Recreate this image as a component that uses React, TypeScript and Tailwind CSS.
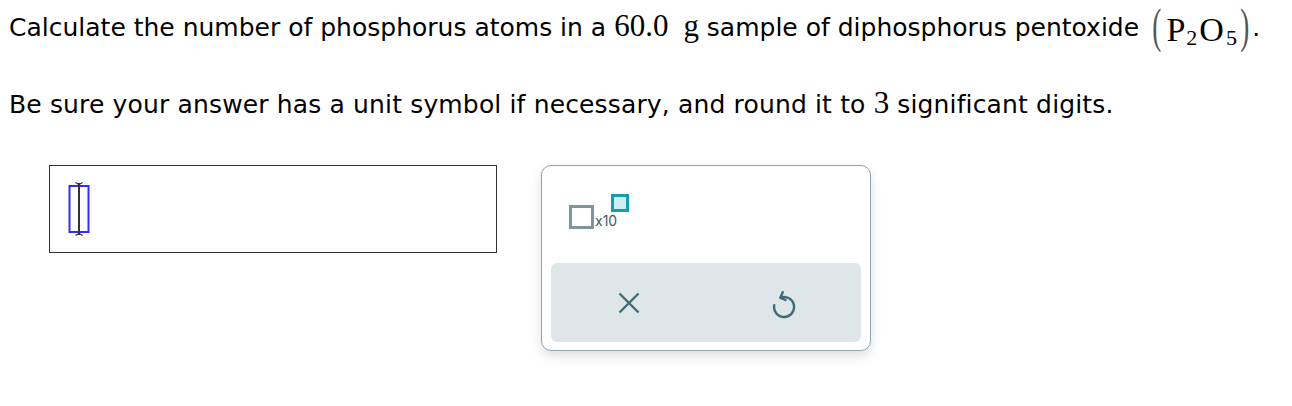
function CursorGlyph() {
  return (
    <svg width="24" height="56" viewBox="0 0 24 56">
      <rect x="2.5" y="5" width="19" height="46" fill="none" stroke="#3030f5" strokeWidth="2" />
      <line x1="12" y1="2" x2="12" y2="54" stroke="#333" strokeWidth="2" />
      <path d="M8.5 1.5 L12 3.5 L15.5 1.5 M8.5 54.5 L12 52.5 L15.5 54.5" fill="none" stroke="#333" strokeWidth="1.2" />
    </svg>
  );
}

const serif = { fontFamily: '"Liberation Serif", "Times New Roman", serif' };

function Paren({ ch }: { ch: string }) {
  return (
    <span className="inline-block align-middle h-[40px] leading-[40px] -my-[8px] text-[34px] text-[#555] scale-y-[1.4] scale-x-[0.8] relative top-[-6px]">
      {ch}
    </span>
  );
}

export default function App() {
  return (
    <div className="w-[1292px] h-[406px] bg-white text-black" style={{ fontFamily: '"DejaVu Sans", Verdana, sans-serif' }}>
      <div className="pl-[9px] pt-[12px] text-[25px] leading-[32px] h-[44px] whitespace-nowrap">
        Calculate the number of phosphorus atoms in a{' '}
        <span className="text-[31px] leading-[0]" style={serif}>60.0</span>
        <span className="text-[31px] leading-[0] ml-[15px]" style={serif}>g</span>
        {' '}sample of diphosphorus pentoxide
        <span className="text-[34px] leading-[0] relative top-[5px] ml-[12px]" style={serif}>
          <Paren ch="(" />
          <span className="ml-[4px]">P</span>
          <span className="text-[22px] relative top-[4px] ml-[1px] mr-[2px]">2</span>
          <span>O</span>
          <span className="text-[22px] relative top-[4px] ml-[2px] mr-[2px]">5</span>
          <Paren ch=")" />
        </span>
        <span className="ml-[2px]">.</span>
      </div>

      <div className="pl-[9px] mt-[45px] text-[25px] leading-[32px] h-[32px] whitespace-nowrap tracking-[0.15px]">
        Be sure your answer has a unit symbol if necessary, and round it to{' '}
        <span className="text-[31px] leading-[0] tracking-normal" style={serif}>3</span>
        {' '}significant digits.
      </div>

      <div className="flex items-start mt-[44px] ml-[49px] gap-[44px]">
        <div className="w-[448px] h-[88px] border border-[#333] flex items-center pl-[17px]">
          <CursorGlyph />
        </div>

        <div className="w-[330px] h-[186px] border border-[#8fa6ae] rounded-[10px] bg-white shadow-[0_5px_12px_rgba(0,0,0,0.13)] flex flex-col px-[9px] pb-[8px]">
          <div className="h-[97px] pt-[28px] pl-[18px]">
            <div className="flex items-start">
              <div className="w-[25px] h-[24px] mt-[11px] border-[3px] border-[#7d959d]" />
              <span className="text-[14px] text-[#3d5a66] leading-none mt-[20px] ml-[1px]" style={{ fontFamily: 'Inter, "Open Sans", sans-serif' }}>x10</span>
              <div className="w-[18px] h-[18px] border-[3px] border-[#169cb5] bg-[#cdeef4] -ml-[6px]" />
            </div>
          </div>
          <div className="flex-1 bg-[#dfe6e8] rounded-[6px] flex items-center">
            <button className="flex-1 flex justify-center">
              <svg width="22" height="22" viewBox="0 0 22 22" fill="none" stroke="#3e6b78" strokeWidth="2.4">
                <path d="M1.5 1.5 L20.5 20.5 M20.5 1.5 L1.5 20.5" />
              </svg>
            </button>
            <button className="flex-1 flex justify-center">
              <svg width="24" height="32" viewBox="0 0 24 32" fill="none" stroke="#3e6b78" strokeWidth="2.4" strokeLinecap="round" strokeLinejoin="round">
                <path d="M8.6 10.6 A10 10 0 1 1 2.2 18.3" />
                <path d="M10.7 5.2 L8.4 10.8 L13.6 13" />
              </svg>
            </button>
          </div>
        </div>
      </div>
    </div>
  );
}
